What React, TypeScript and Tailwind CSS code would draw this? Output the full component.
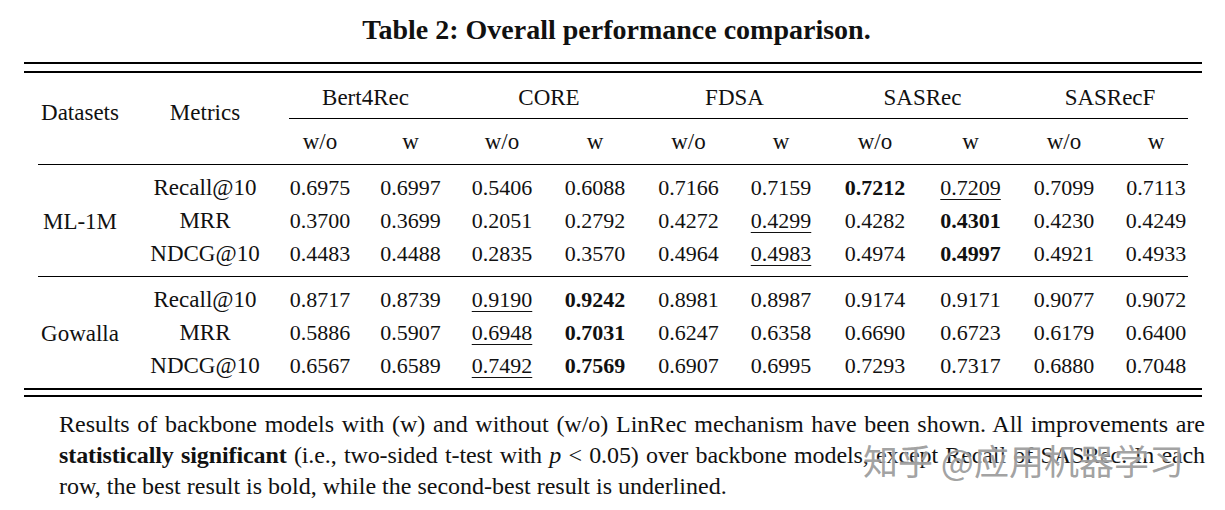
import React from 'react';

// shared column template so header and body line up
const cols = 'grid grid-cols-[84px_153px_90px_91px_92px_94px_93px_92px_96px_95px_92px_92px]';

const groups = ['Bert4Rec', 'CORE', 'FDSA', 'SASRec', 'SASRecF'];

// '*' = best (bold), '_' = second best (underlined)
const blocks: { name: string; rows: { metric: string; values: string[] }[] }[] = [
  {
    name: 'ML-1M',
    rows: [
      {
        metric: 'Recall@10',
        values: ['0.6975', '0.6997', '0.5406', '0.6088', '0.7166', '0.7159', '*0.7212', '_0.7209', '0.7099', '0.7113'],
      },
      {
        metric: 'MRR',
        values: ['0.3700', '0.3699', '0.2051', '0.2792', '0.4272', '_0.4299', '0.4282', '*0.4301', '0.4230', '0.4249'],
      },
      {
        metric: 'NDCG@10',
        values: ['0.4483', '0.4488', '0.2835', '0.3570', '0.4964', '_0.4983', '0.4974', '*0.4997', '0.4921', '0.4933'],
      },
    ],
  },
  {
    name: 'Gowalla',
    rows: [
      {
        metric: 'Recall@10',
        values: ['0.8717', '0.8739', '_0.9190', '*0.9242', '0.8981', '0.8987', '0.9174', '0.9171', '0.9077', '0.9072'],
      },
      {
        metric: 'MRR',
        values: ['0.5886', '0.5907', '_0.6948', '*0.7031', '0.6247', '0.6358', '0.6690', '0.6723', '0.6179', '0.6400'],
      },
      {
        metric: 'NDCG@10',
        values: ['0.6567', '0.6589', '_0.7492', '*0.7569', '0.6907', '0.6995', '0.7293', '0.7317', '0.6880', '0.7048'],
      },
    ],
  },
];

function Value({ raw }: { raw: string }) {
  if (raw.startsWith('*')) return <span className="font-bold">{raw.slice(1)}</span>;
  if (raw.startsWith('_'))
    return <span className="underline decoration-1 underline-offset-[4px]">{raw.slice(1)}</span>;
  return <span>{raw}</span>;
}

function Block({ block }: { block: (typeof blocks)[number] }) {
  return (
    <div className={`${cols} grid-rows-[33px_33px_33px] py-[6px]`}>
      <div className="row-span-3 flex items-center justify-center pt-[2px] text-[23px]">{block.name}</div>
      {block.rows.map((row) => (
        <React.Fragment key={row.metric}>
          <div className="col-start-2 flex items-center justify-center pl-[13px] text-[23px]">{row.metric}</div>
          {row.values.map((v, i) => (
            <div key={i} className="flex items-center justify-center text-[22px]">
              <Value raw={v} />
            </div>
          ))}
        </React.Fragment>
      ))}
    </div>
  );
}

export default function App() {
  return (
    <div className="h-[510px] w-[1225px] overflow-hidden bg-white font-['Liberation_Serif',serif] leading-none text-[#111]">
      <div className="h-[62px] pl-[8px] pt-[12px] text-center text-[28px] font-bold leading-[36px]">
        Table 2: Overall performance comparison.
      </div>

      <div className="ml-[24px] w-[1178px]">
        <div className="h-[11px] border-y-2 border-black" />

        <div className="pl-[14px]">
          <div className={`${cols} grid-rows-[45px_1px_45px]`}>
            <div className="row-span-3 flex items-center justify-center pb-[12px] text-[23px]">Datasets</div>
            <div className="row-span-3 flex items-center justify-center pb-[12px] pl-[13px] text-[23px]">Metrics</div>
            {groups.map((g) => (
              <div key={g} className="col-span-2 flex items-center justify-center pt-[4px] text-[23px]">
                {g}
              </div>
            ))}
            <div className="col-span-10 ml-[14px] mr-[14px] bg-black" />
            {groups.map((g) => (
              <React.Fragment key={g}>
                <div className="flex items-center justify-center text-[23px]">w/o</div>
                <div className="flex items-center justify-center text-[23px]">w</div>
              </React.Fragment>
            ))}
          </div>
          <div className="mr-[14px] h-px bg-black" />
          <Block block={blocks[0]} />
          <div className="mr-[14px] h-px bg-black" />
          <Block block={blocks[1]} />
        </div>

        <div className="h-[9px] border-y-2 border-black" />
      </div>

      <div className="relative ml-[59px] mt-[12px] w-[1146px] text-[24px] leading-[31px]">
        <div className="text-justify [text-align-last:justify]">
          Results of backbone models with (w) and without (w/o) LinRec mechanism have been shown. All improvements are
        </div>
        <div className="text-justify tracking-[-0.1px] [text-align-last:justify]">
          <b>statistically significant</b> (i.e., two-sided t-test with <i>p</i> &lt; 0.05) over backbone models, except
          Recall of SASRec. In each
        </div>
        <div>row, the best result is bold, while the second-best result is underlined.</div>
        <span className="pointer-events-none absolute left-[804px] top-[33px] whitespace-nowrap font-['Noto_Sans_CJK_SC',sans-serif] text-[35px] leading-none text-[#8a8a8a]/80 [text-shadow:0_0_2px_white]">
          知乎 @应用机器学习
        </span>
      </div>
    </div>
  );
}
